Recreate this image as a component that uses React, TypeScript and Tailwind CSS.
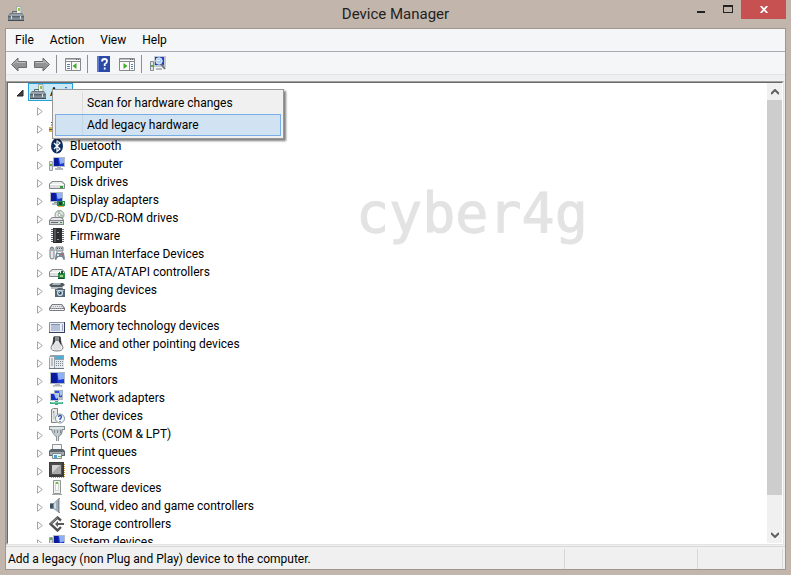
import type { ReactNode } from "react";

interface Device {
  name: string;
  icon: ReactNode;
}

function Screen({ x = 0, y = 0, w = 12, h = 9 }: { x?: number; y?: number; w?: number; h?: number }) {
  return (
    <g>
      <rect x={x} y={y} width={w} height={h} fill="#b4bcc6" />
      <rect x={x + 1} y={y + 1} width={w - 2} height={h - 2} fill="#1a3ad6" />
      <path d={`M${x + 1} ${y + 1}h${w / 2 - 2}l1 ${h - 2}h-${w / 2 - 1}z`} fill="#0a1a9a" />
      <path d={`M${x + w / 2} ${y + 1}h${w / 2 - 1}v${h / 2}l-${w / 2 - 2} 1z`} fill="#8fb0f7" />
    </g>
  );
}

function Drive({ y = 6 }: { y?: number }) {
  return (
    <g>
      <path d={`M3 ${y}h10l3 3v4q0 1-1 1H1q-1 0-1-1V${y + 3}z`} fill="#85888b" />
      <path d={`M3.500 ${y + 1}h9l2 2H1.500z`} fill="#eceded" />
      <path d={`M1 ${y + 3}h14v4H1z`} fill="#dcdedf" />
      <path d={`M1 ${y + 3}h14v1H1z`} fill="#fff" />
      <rect x="11" y={y + 5} width="3" height="2" fill="#2f9b35" />
    </g>
  );
}

function Toolbox() {
  return (
    <g>
      <path d="M8.500 .5h4.500v7H8.500z" fill="#eef1ec" stroke="#a3aaa4" />
      <path d="M10 2h2v3h-2z" fill="#8cc63f" />
      <path d="M4.500 8V5.500H9" fill="none" stroke="#5d676f" />
      <path d="M2 7h12l2 3v5H0v-5z" fill="#6f7c86" />
      <path d="M2 8h12l1 2H1z" fill="#97a2ab" />
      <path d="M0 10h16v1H0z" fill="#56626c" />
      <path d="M1 12h14v2H1z" fill="#7f8c96" />
      <path d="M3 10h1v3H3zM12 10h1v3h-1z" fill="#dde3e6" />
      <path d="M0 14h16v1H0z" fill="#414c55" />
    </g>
  );
}

const devices: Device[] = [
  { name: "", icon: null },
  {
    name: "",
    icon: (
      <g>
        <path d="M2 2l2 2M2 5h3" stroke="#555" />
        <path d="M0 7h4v2H0zM0 10h15v2H0z" fill="#e3b53c" />
        <path d="M0 9h15v1H0z" fill="#555" />
      </g>
    ),
  },
  {
    name: "Bluetooth",
    icon: (
      <g>
        <ellipse cx="8" cy="8" rx="6" ry="7.500" fill="#0b2c63" />
        <path d="M5 5l6 6-3 2.500v-11L11 5l-6 6" fill="none" stroke="#fff" strokeWidth="1.200" />
      </g>
    ),
  },
  {
    name: "Computer",
    icon: (
      <g>
        <path d="M.5 5.500h3v9h-3z" fill="#e0e3e5" stroke="#9da2a7" />
        <rect x="1" y="8" width="2" height="2" fill="#55b53b" />
        <Screen x={4} y={1} w={12} h={10} />
        <path d="M8 11h4v1h2v2H6v-2h2z" fill="#b3b8bd" />
      </g>
    ),
  },
  { name: "Disk drives", icon: <Drive y={7} /> },
  {
    name: "Display adapters",
    icon: (
      <g>
        <Screen x={1} y={0} w={13} h={10} />
        <path d="M5 10h4v1H5z" fill="#8f959b" />
        <path d="M3 11h5v2H3z" fill="#b6bbc0" />
        <path d="M8 9h8v5H8z" fill="#2d8747" />
        <path d="M10 10h3v3h-3z" fill="#153f27" />
        <path d="M14 10h1v2h-1z" fill="#c2dfab" />
        <path d="M9 14h6v1H9z" fill="#d6b13e" />
      </g>
    ),
  },
  {
    name: "DVD/CD-ROM drives",
    icon: (
      <g>
        <circle cx="10.500" cy="5" r="4.500" fill="#e3e7e8" stroke="#92989b" />
        <path d="M10.500 5L8 1l3-.5zM11 5l3 3 .5-3z" fill="#9acb98" />
        <circle cx="10.500" cy="5" r="1.500" fill="#fff" stroke="#8b9093" strokeWidth=".8" />
        <path d="M3 7h10l2 3v5H0v-5z" fill="#83878a" />
        <path d="M3.500 8H12l2 2H1z" fill="#e6e8e9" />
        <path d="M1 11h13v3H1z" fill="#d2d5d7" />
        <path d="M2 12h7v1H2z" fill="#62676a" />
        <path d="M11 12h2v1h-2z" fill="#2f9b35" />
      </g>
    ),
  },
  {
    name: "Firmware",
    icon: (
      <g>
        <path d="M2 1.500h13M2 3.500h13M2 5.500h13M2 7.500h13M2 9.500h13M2 11.500h13M2 13.500h13" stroke="#6b6e70" />
        <path d="M4 0h9v15H4z" fill="#2b2d2f" />
        <path d="M5 1h2v13H5z" fill="#54575a" />
        <path d="M8 4h2v1H8zM8 11h2v1H8z" fill="#96999b" />
      </g>
    ),
  },
  {
    name: "Human Interface Devices",
    icon: (
      <g>
        <path d="M1 4q0-3 2-3t2 3v7q0 2-2 2t-2-2z" fill="#e3e7ea" stroke="#777d83" />
        <path d="M3 1v4" stroke="#656b72" />
        <path d="M7 1h7v4H7z" fill="#cbd0d5" stroke="#7b8289" />
        <path d="M8 2h1v1H8zM10 2h1v1h-1zM12 2h1v1h-1z" fill="#555d66" />
        <path d="M7 7q1-2 2 0h3q1-2 3 0l1 6q-1 2-2 0l-1-2H9l-2 3q-2 0-1-2z" fill="#788595" />
        <path d="M8 8h2v2H8z" fill="#dce4eb" />
        <path d="M13 8h1v1h-1z" fill="#e15440" />
        <path d="M12 9h1v1h-1z" fill="#43a4e0" />
      </g>
    ),
  },
  {
    name: "IDE ATA/ATAPI controllers",
    icon: (
      <g>
        <Drive y={5} />
        <path d="M9 9h7v6H9z" fill="#2b8745" />
        <path d="M10 8h1v2h-1zM12 7h2v3h-2z" fill="#195c2c" />
        <path d="M11 11h3v2h-3z" fill="#9fd18c" />
        <path d="M9 14h6v1H9z" fill="#184a24" />
      </g>
    ),
  },
  {
    name: "Imaging devices",
    icon: (
      <g>
        <path d="M0 3l3-2h11l2 2-3 2H2z" fill="#535c61" />
        <path d="M4 1h8l-1 2H3z" fill="#aab6bb" />
        <path d="M2 5h12v2H2z" fill="#b9c2c6" />
        <path d="M6 7h2l1-1h4l1 1h2v8H6z" fill="#566673" />
        <path d="M7 8h8v1H7z" fill="#a8b7c1" />
        <circle cx="11" cy="11" r="3" fill="#dce6ec" />
        <circle cx="11" cy="11" r="1.800" fill="#24506f" />
        <path d="M10 10h1v1h-1z" fill="#a8daf1" />
      </g>
    ),
  },
  {
    name: "Keyboards",
    icon: (
      <g>
        <path d="M3 4h10l3 4v2l-1 1H1l-1-1V8z" fill="#777d82" />
        <path d="M3.500 5h9l2 3h-13z" fill="#e4e7e9" />
        <path d="M4 6.500h9M2 8.500h12" stroke="#9ca1a5" strokeDasharray="1 1" />
        <path d="M1 9h14v1H1z" fill="#f5f6f7" />
      </g>
    ),
  },
  {
    name: "Memory technology devices",
    icon: (
      <g>
        <path d="M.5 4.500h15v10H.5z" fill="#e9ecf3" stroke="#8a92a0" />
        <path d="M2 6h9v7H2z" fill="#b5c1d8" />
        <path d="M2 6h9v1H2z" fill="#7f92b6" />
        <path d="M13.500 6v7" stroke="#9aa6be" />
        <path d="M15.500 4v11M0 14.500h16" stroke="#35415c" />
      </g>
    ),
  },
  {
    name: "Mice and other pointing devices",
    icon: (
      <g>
        <path d="M5 .5h6l1 6 2 5q0 3.500-6 3.500t-6-3.500l2-5z" fill="#f1f2f3" stroke="#777c80" />
        <path d="M4.500 1h2v4L3.500 10l.5-4zM9.500 1h2l1 9-3-5z" fill="#33373a" />
        <path d="M7 1h2v4H7z" fill="#878c90" />
        <path d="M5 8l3-3 3 3 1.500 4q-1 2-4.500 2t-4.500-2z" fill="#dfe1e3" />
      </g>
    ),
  },
  {
    name: "Modems",
    icon: (
      <g>
        <path d="M1 1h14v14H0V5z" fill="#98a2aa" />
        <path d="M1 3h4v11H1z" fill="#edf0f2" />
        <path d="M2 4h2v8H2z" fill="#b7bfc5" />
        <path d="M6 2h8v3H6z" fill="#4faed6" />
        <path d="M6 6h9v8H6z" fill="#e6eaec" />
        <path d="M7 7.500h7M7 9.500h7M7 11.500h7" stroke="#7c878f" strokeDasharray="1 1" />
        <path d="M0 14h15v1H0z" fill="#6b767e" />
      </g>
    ),
  },
  {
    name: "Monitors",
    icon: (
      <g>
        <Screen x={1} y={0} w={15} h={12} />
        <path d="M6 12h5v1h2v2H4v-2h2z" fill="#b7b9ba" />
        <path d="M5 14h7v1H5z" fill="#d8d8d5" />
      </g>
    ),
  },
  {
    name: "Network adapters",
    icon: (
      <g>
        <path d="M5 0h9v8H5z" fill="#a9b3bf" />
        <path d="M6 1h7v6H6z" fill="#2a4fe0" />
        <path d="M10 1h3v4l-2 1z" fill="#a4c2fa" />
        <path d="M1 3h9v8H1z" fill="#c5ccd4" />
        <path d="M2 4h7v6H2z" fill="#1430c4" />
        <path d="M5 4h4v4l-2 1z" fill="#a4c2fa" />
        <path d="M10 8h4v2h-4z" fill="#b3bac1" />
        <path d="M6 11h3v1h5v2H9v1H6v-1H1v-2h5z" fill="#3bb387" />
        <path d="M2 12h11v1H2z" fill="#80d2ae" />
      </g>
    ),
  },
  {
    name: "Other devices",
    icon: (
      <g>
        <path d="M2.500 1.500l2-1h4v13l-1 1h-5z" fill="#e7eae8" stroke="#7d8380" />
        <path d="M4 3h2v8H4z" fill="#cbd2cd" />
        <path d="M4 3h1v2H4z" fill="#69b844" />
        <circle cx="11" cy="10.500" r="4.500" fill="#f6f8fb" stroke="#878f9b" />
        <path d="M9.500 9q0-1.500 1.500-1.500T12.500 9q0 .8-1.500 1.800V12M11 13v1" fill="none" stroke="#2356b0" strokeWidth="1.300" />
      </g>
    ),
  },
  {
    name: "Ports (COM & LPT)",
    icon: (
      <g>
        <path d="M0 0h16v4h-2l-1 4-3 3v4H7v-4L4 8 2 4H0z" fill="#858f96" />
        <path d="M1 1h14v2H1z" fill="#dfe4e7" />
        <path d="M3 3h10l-1 4-2 3H7L4 7z" fill="#c3cbd0" />
        <path d="M5 4h1v3H5zM8 4h1v3H8zM11 4h1v3h-1z" fill="#7f8990" />
        <path d="M8 10h1v5H8z" fill="#e0e4e6" />
      </g>
    ),
  },
  {
    name: "Print queues",
    icon: (
      <g>
        <path d="M3.500 .5h9V6h-9z" fill="#f5f6f7" stroke="#8f9599" />
        <path d="M2 5h12l2 2v5H0V7z" fill="#5c656b" />
        <path d="M1 8h14v3H1z" fill="#a2acb2" />
        <path d="M3.500 9.500h9v5h-9z" fill="#eef1f3" stroke="#858c90" />
        <path d="M5 11h3v3H5z" fill="#49a6d4" />
        <path d="M9 12h3v1H9z" fill="#7fb65c" />
      </g>
    ),
  },
  {
    name: "Processors",
    icon: (
      <g>
        <path d="M15.500 2v13M2 15.500h13" stroke="#c79a36" strokeDasharray="1 1" />
        <path d="M0 0h15v15H0z" fill="#3d3b3a" />
        <path d="M1 1h12v12H1z" fill="#4f4d4c" />
        <path d="M3 3h9v9H3z" fill="#a8a9aa" />
        <path d="M3 3h8l-8 8z" fill="#d2d3d3" />
      </g>
    ),
  },
  {
    name: "Software devices",
    icon: (
      <g>
        <path d="M4.500 .5h7v13h-7z" fill="#f0f2f0" stroke="#929895" />
        <path d="M6 2h4v9H6z" fill="#cfd6d1" />
        <path d="M7 4h2v6H7z" fill="#f8faf8" />
        <path d="M7 2h2v2H7z" fill="#6cc03c" />
        <path d="M3 14h10v1H3z" fill="#a4a9a6" />
      </g>
    ),
  },
  {
    name: "Sound, video and game controllers",
    icon: (
      <g>
        <path d="M1 5h4l5-5h1v15h-1l-5-4H1z" fill="#7b8b97" />
        <path d="M5 5l4-4v13l-4-3z" fill="#a1b0ba" />
        <path d="M1 6h3v4H1z" fill="#3a5160" />
        <path d="M5 6l2-2v7l-2-1z" fill="#d3dde3" />
        <path d="M10 1h1v13h-1z" fill="#bcc8cf" />
      </g>
    ),
  },
  {
    name: "Storage controllers",
    icon: (
      <g>
        <path d="M12 4.500L8.500 1.500 1.500 8l7 6.500L12 11" fill="none" stroke="#505050" strokeWidth="2.400" />
        <path d="M8.500 1.500L1.500 8" fill="none" stroke="#9b9b9b" />
        <path d="M6 8l3-3v2h6v2H9v2z" fill="#5a5a5a" />
      </g>
    ),
  },
  {
    name: "System devices",
    icon: (
      <g>
        <path d="M.5 3.500h3V13h-3z" fill="#dadddf" stroke="#9da2a7" />
        <path d="M1 4h2v2H1z" fill="#59b742" />
        <Screen x={4} y={1} w={12} h={11} />
      </g>
    ),
  },
];

function Icon({ children }: { children: ReactNode }) {
  return (
    <svg viewBox="0 0 16 16" className="h-4 w-4 shrink-0" aria-hidden="true">
      {children}
    </svg>
  );
}

function Separator() {
  return <span className="mr-2 ml-[6px] h-[18px] w-px bg-[#8d8f93]" />;
}

function ConsoleIcon({ flip = false }: { flip?: boolean }) {
  return (
    <Icon>
      <path d="M.5 2.500h15v12H.5z" fill="#fbfbfb" stroke="#85898d" />
      <path d="M1 3h14v1H1z" fill="#b9bec3" />
      <path d="M11 3h1v1h-1zM13 3h1v1h-1z" fill="#5f6469" />
      <path d="M1 5.500h14" stroke="#85898d" />
      {flip ? (
        <g>
          <path d="M10.500 6v8" stroke="#85898d" />
          <path d="M4.500 7l4 3-4 3z" fill="#3fae2a" />
          <path d="M12 8.500h2M12 10.500h2M12 12.500h2" stroke="#5f7fb4" />
        </g>
      ) : (
        <g>
          <path d="M6.500 6v8" stroke="#85898d" />
          <path d="M11.500 7l-4 3 4 3z" fill="#3fae2a" />
          <path d="M2 8.500h3M2 10.500h3M2 12.500h3" stroke="#5f7fb4" />
        </g>
      )}
    </Icon>
  );
}

function ArrowIcon({ forward = false }: { forward?: boolean }) {
  return (
    <Icon>
      <path
        d={forward ? "M15.500 8.500L9 2v3.500H.5v6H9V15z" : "M.5 8.500L7 2v3.500h8.500v6H7V15z"}
        fill="#939393"
        stroke="#6c6c6c"
      />
      <path d={forward ? "M1.500 6.500H10V4.500l4 4" : "M2 8.500l4-4v2h8.500"} fill="none" stroke="#c2c2c2" />
    </Icon>
  );
}

function TitleBar() {
  return (
    <header className="grid h-7 shrink-0 grid-cols-[1fr_auto_1fr] items-center">
      <div className="pl-2">
        <Icon>
          <Toolbox />
        </Icon>
      </div>
      <h1 className="text-[15px] leading-7 text-[#222]">Device Manager</h1>
      <div className="flex h-full items-start justify-end pr-[5px]">
        <button aria-label="Minimize" className="flex h-5 w-7 items-center justify-center">
          <svg viewBox="0 0 10 10" className="h-[10px] w-[10px]">
            <path d="M1 6h8v2H1z" fill="#222" />
          </svg>
        </button>
        <button aria-label="Maximize" className="flex h-5 w-[26px] items-center justify-center">
          <svg viewBox="0 0 10 10" className="h-[10px] w-[10px]">
            <path d="M0 0h10v8H0zM1 2v5h8V2z" fill="#222" fillRule="evenodd" />
          </svg>
        </button>
        <button aria-label="Close" className="flex h-[19px] w-[45px] items-center justify-center bg-[#c75050]">
          <svg viewBox="0 0 8 7" className="h-[7px] w-2">
            <path d="M.7 0l6.600 7M7.300 0L.7 7" stroke="#fff" strokeWidth="1.800" />
          </svg>
        </button>
      </div>
    </header>
  );
}

function Toolbar() {
  return (
    <div className="flex h-[23px] shrink-0 items-center border-b border-[#e3e4e6] bg-[#f5f6f8] pt-[2px] pl-[5px]">
      <button aria-label="Back" className="mr-[7px]"><ArrowIcon /></button>
      <button aria-label="Forward"><ArrowIcon forward /></button>
      <Separator />
      <button aria-label="Show or hide console tree"><ConsoleIcon /></button>
      <Separator />
      <button aria-label="Help" className="mr-[7px]">
        <Icon>
          <path d="M1 0h13v16H1z" fill="#2b4aa8" />
          <path d="M1 0h2v16H1z" fill="#5b7bd2" />
          <path d="M6 5.500Q6 3 8.500 3T11 5.300q0 1.700-2.300 3V10M8.700 11.500v2" fill="none" stroke="#fff" strokeWidth="1.800" />
        </Icon>
      </button>
      <button aria-label="Show or hide action pane"><ConsoleIcon flip /></button>
      <Separator />
      <button aria-label="Scan for hardware changes">
        <Icon>
          <path d="M.5 5.500h3v9h-3z" fill="#e3e6e8" stroke="#858b90" />
          <path d="M1 9h2v2H1z" fill="#55b53b" />
          <path d="M4 0h12v11H4z" fill="#c3c8cd" />
          <path d="M5 1h9v8H5z" fill="#1c3fc4" />
          <circle cx="9" cy="5" r="3.200" fill="#a9cdf3" stroke="#e9eff5" />
          <path d="M7 4h3v1H7z" fill="#e5f2fc" />
          <path d="M11 8l4 5" stroke="#6d747a" strokeWidth="2" />
          <path d="M6 12h6v2H6z" fill="#b3b8bd" />
        </Icon>
      </button>
    </div>
  );
}

function DeviceTree() {
  return (
    <div className="min-w-0 flex-1 overflow-hidden">
      <div className="flex h-[18px] items-center pl-2">
        <svg viewBox="0 0 7 7" className="mt-[2px] mr-1 h-[7px] w-[7px]">
          <path d="M6 0v6H0z" fill="#404040" stroke="#262626" />
        </svg>
        <button className="flex h-[18px] items-center gap-1 border border-[#26a0da] bg-[#cbe8f6] px-px">
          <Icon>
            <Toolbox />
          </Icon>
          <span className="pr-1">Ani</span>
        </button>
      </div>
      <ul>
        {devices.map((device, index) => (
          <li key={index} className="flex h-[18px] items-center pl-7">
            <svg viewBox="0 0 6 9" className="mt-[2px] mr-[6px] h-[9px] w-[6px] shrink-0">
              <path d="M.5.8l4.800 3.700L.5 8.200z" fill="#fff" stroke="#a6a6a6" />
            </svg>
            <Icon>{device.icon}</Icon>
            <span className="pl-[5px] whitespace-nowrap">{device.name}</span>
          </li>
        ))}
      </ul>
    </div>
  );
}

function Scrollbar() {
  return (
    <div className="flex w-[15px] shrink-0 flex-col bg-[#f0f0f0]">
      <button aria-label="Scroll up" className="flex h-[17px] items-center justify-center">
        <svg viewBox="0 0 8 6" className="h-[6px] w-2">
          <path d="M0 5l4-4 4 4" fill="none" stroke="#5f5f5f" strokeWidth="2" />
        </svg>
      </button>
      <div className="flex flex-1 flex-col">
        <div className="flex-[395] bg-[#cdcdcd]" />
        <div className="flex-[31]" />
      </div>
      <button aria-label="Scroll down" className="flex h-[17px] items-center justify-center">
        <svg viewBox="0 0 8 6" className="h-[6px] w-2">
          <path d="M0 1l4 4 4-4" fill="none" stroke="#5f5f5f" strokeWidth="2" />
        </svg>
      </button>
    </div>
  );
}

function ContextMenu() {
  return (
    <div
      role="menu"
      className="absolute top-[6px] left-11 w-[232px] border border-[#979797] bg-[#f0f0f0] p-[2px] shadow-[2px_2px_2px_rgba(0,0,0,0.5)]"
    >
      <button role="menuitem" className="flex h-[22px] w-full items-center">
        <span className="h-full w-7 border-r border-[#dcdcdc]" />
        <span className="pl-1">Scan for hardware changes</span>
      </button>
      <button role="menuitem" className="flex h-[22px] w-full items-center border border-[#78aee5] bg-[#d1e2f2]">
        <span className="h-full w-[27px] border-r border-[#c5d6e6]" />
        <span className="pl-1">Add legacy hardware</span>
      </button>
    </div>
  );
}

function App() {
  return (
    <div className="flex h-screen flex-col bg-[#c2b5ab] font-[Roboto,sans-serif] text-[12px] leading-[18px] text-black">
      <TitleBar />
      <main className="mx-[5px] mb-[5px] flex min-h-0 flex-1 flex-col border border-[#a0968f] bg-[#f0f0f0]">
        {/* Menu bar */}
        <nav className="flex h-[23px] shrink-0 items-center gap-4 border-b border-[#a9abaf] bg-[#f5f6f8] pl-[9px]">
          <button>File</button>
          <button>Action</button>
          <button>View</button>
          <button>Help</button>
        </nav>
        <Toolbar />

        {/* Device list */}
        <div className="mr-px mt-[6px] flex min-h-0 flex-1 border border-t-[#a0a0a0] border-r-[#e3e3e3] border-b-[#e3e3e3] border-l-[#a0a0a0]">
          <div className="relative flex min-w-0 flex-1 border border-t-[#696969] border-r-white border-b-white border-l-[#696969] bg-white pl-px">
            <DeviceTree />
            <p className="pointer-events-none absolute top-[94px] left-[348px] font-['DejaVu_Sans_Mono',monospace] text-[55px] leading-[72px] text-[#e3e3e3] [-webkit-text-stroke:1px]">
              cyber4g
            </p>
            <Scrollbar />
            <ContextMenu />
          </div>
        </div>

        {/* Status bar */}
        <footer className="mt-px flex h-[23px] shrink-0 items-stretch border-t border-[#d7d7d7] pt-[2px] pr-[2px]">
          <span className="flex flex-1 items-center border-r border-[#d7d7d7] pl-[2px]">
            Add a legacy (non Plug and Play) device to the computer.
          </span>
          <span className="w-[133px] border-r border-[#d7d7d7]" />
          <span className="w-[85px] border-r border-[#d7d7d7]" />
        </footer>
      </main>
    </div>
  );
}

export default App;
